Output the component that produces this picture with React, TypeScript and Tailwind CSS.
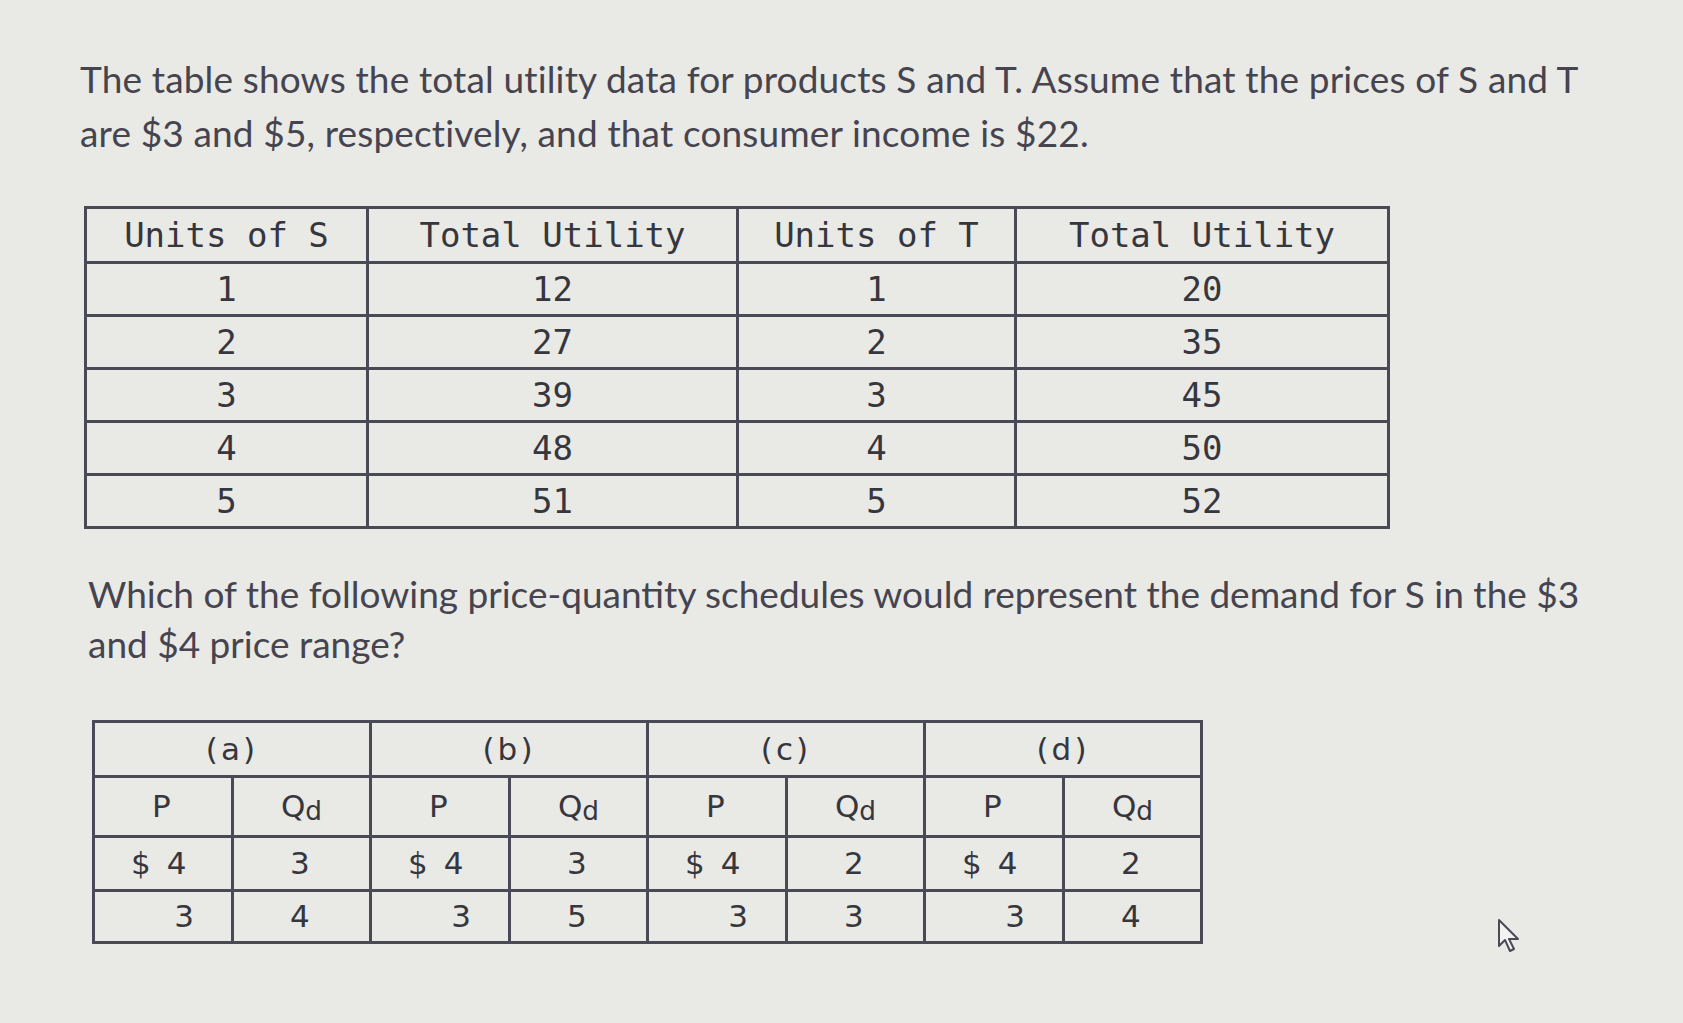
const utility = [
  [1, 12, 1, 20],
  [2, 27, 2, 35],
  [3, 39, 3, 45],
  [4, 48, 4, 50],
  [5, 51, 5, 52],
];

const schedules = [
  { label: "(a)", q: [3, 4] },
  { label: "(b)", q: [3, 5] },
  { label: "(c)", q: [2, 3] },
  { label: "(d)", q: [2, 4] },
];

const cell = "border-[3px] border-[#4a4a56]";

function Qd() {
  return (
    <span className="tracking-normal">
      Q<sub className="text-[0.85em] align-baseline relative top-[0.12em]">d</sub>
    </span>
  );
}

export default function App() {
  return (
    <div className="relative w-[1683px] h-[1023px] overflow-hidden bg-[#e9e9e5] text-[#46444f]">
      <div className="pl-[80px] pt-[52px]">
        <p className="whitespace-nowrap text-[37px] tracking-[0.004em] leading-[54px] font-['Lato',sans-serif]">
          The table shows the total utility data for products S and T. Assume that the prices of S and T
          <br />
          are $3 and $5, respectively, and that consumer income is $22.
        </p>

        <table className="ml-1 mt-[46px] border-collapse font-['DejaVu_Sans_Mono',monospace] text-[34px] leading-none text-[#36363e]">
          <thead>
            <tr className="h-[55px]">
              <th className={`${cell} w-[282px] font-normal`}>Units of S</th>
              <th className={`${cell} w-[370px] font-normal`}>Total Utility</th>
              <th className={`${cell} w-[278px] font-normal`}>Units of T</th>
              <th className={`${cell} w-[373px] font-normal`}>Total Utility</th>
            </tr>
          </thead>
          <tbody>
            {utility.map((row, i) => (
              <tr key={i} className="h-[53px]">
                {row.map((v, j) => (
                  <td key={j} className={`${cell} text-center`}>
                    {v}
                  </td>
                ))}
              </tr>
            ))}
          </tbody>
        </table>

        <p className="ml-2 mt-[40px] whitespace-nowrap text-[37px] leading-[50px] font-['Lato',sans-serif]">
          Which of the following price-quantity schedules would represent the demand for S in the $3
          <br />
          and $4 price range?
        </p>

        <table className="ml-3 mt-[51px] border-collapse font-['DejaVu_Sans',sans-serif] text-[31px] tracking-[0.1em] text-[#36363e]">
          <thead>
            <tr className="h-[55px]">
              {schedules.map((s) => (
                <th key={s.label} colSpan={2} className={`${cell} font-normal`}>
                  {s.label}
                </th>
              ))}
            </tr>
          </thead>
          <tbody>
            <tr className="h-[60px]">
              {schedules.map((s) => [
                <td key={s.label + "p"} className={`${cell} w-[139px] text-center`}>P</td>,
                <td key={s.label + "q"} className={`${cell} w-[138px] text-center`}>
                  <Qd />
                </td>,
              ])}
            </tr>
            <tr className="h-[54px]">
              {schedules.map((s) => [
                <td key={s.label + "p"} className={`${cell} pl-[36px] text-left`}>$ 4</td>,
                <td key={s.label + "q"} className={`${cell} text-center`}>{s.q[0]}</td>,
              ])}
            </tr>
            <tr className="h-[52px]">
              {schedules.map((s) => [
                <td key={s.label + "p"} className={`${cell} pr-[34px] text-right`}>3</td>,
                <td key={s.label + "q"} className={`${cell} text-center`}>{s.q[1]}</td>,
              ])}
            </tr>
          </tbody>
        </table>
      </div>

      <svg className="absolute left-[1497px] top-[918px]" width="26" height="36" viewBox="0 0 26 36">
        <path d="M2 2 L2 28 L8 22 L13 33 L17 31 L12 21 L21 21 Z" fill="#f2f2f2" stroke="#4a4a56" strokeWidth="2" strokeLinejoin="round" />
      </svg>
    </div>
  );
}
